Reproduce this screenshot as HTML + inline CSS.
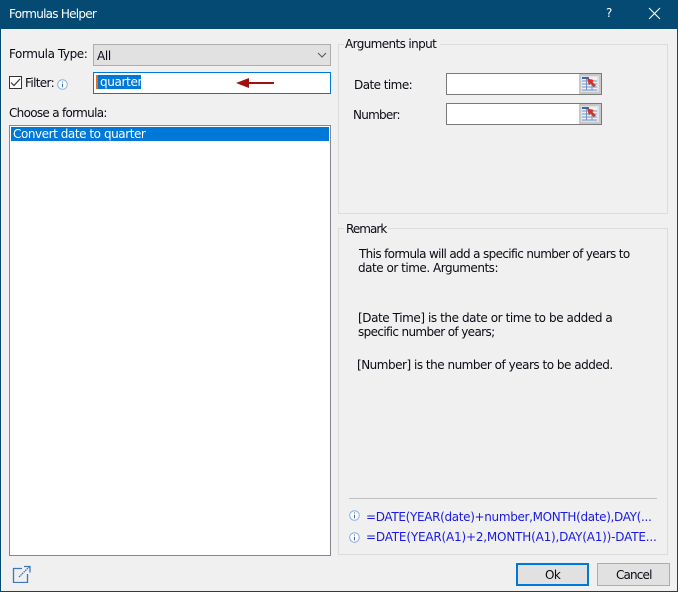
<!DOCTYPE html>
<html><head><meta charset="utf-8"><style>
html,body{margin:0;padding:0}
body{width:678px;height:592px;position:relative;overflow:hidden;background:#f0f0f0;font-family:"DejaVu Sans",sans-serif;font-size:12px;color:#0a0a14}
.a{position:absolute;box-sizing:border-box}
.t{position:absolute;white-space:nowrap;line-height:14px;letter-spacing:-.35px}
.b{color:#1a1ae6}
</style></head><body>
<div class="a" style="left:0;top:0;width:678px;height:29px;background:#054a73"></div>
<div class="a" style="left:0;top:0;width:1px;height:592px;background:#054a73"></div>
<div class="a" style="right:0;top:0;width:1px;height:592px;background:#054a73"></div>
<div class="a" style="left:0;bottom:0;width:678px;height:1px;background:#054a73"></div>
<div class="t" style="left:9px;top:7px;color:#fff;letter-spacing:-.75px">Formulas Helper</div>
<div class="t" style="left:606px;top:6px;color:#fff">?</div>
<svg class="a" style="left:648px;top:7px" width="13" height="13"><path d="M1 1L12 12M12 1L1 12" stroke="#fff" stroke-width="1.1"/></svg>

<div class="t" style="left:9px;top:47px;letter-spacing:-.43px">Formula Type:</div>
<div class="a" style="left:93px;top:44px;width:238px;height:22px;background:#e1e1e1;border:1px solid #adadad"></div>
<div class="t" style="left:97px;top:49px">All</div>
<svg class="a" style="left:317px;top:52px" width="10" height="7"><path d="M1 1L5 5L9 1" fill="none" stroke="#555" stroke-width="1"/></svg>

<div class="a" style="left:9px;top:76px;width:13px;height:13px;background:#fff;border:1px solid #333"></div>
<svg class="a" style="left:10px;top:77px" width="11" height="11"><path d="M1 5.500L4 8.500L10 2" fill="none" stroke="#333" stroke-width="1.200"/></svg>
<div class="t" style="left:25px;top:76px;letter-spacing:-.65px">Filter:</div>
<svg class="a" style="left:57px;top:79px" width="11" height="11"><circle cx="5.500" cy="5.500" r="4.800" fill="#fff" stroke="#8fb0dc"/><path d="M5.500 2.500v1M5.500 4.800v3.500" stroke="#3a70b8"/></svg>
<div class="a" style="left:93px;top:72px;width:238px;height:22px;background:#fff;border:1px solid #0078d7"></div>
<div class="a" style="left:96px;top:75px;width:2px;height:14px;background:#e07020"></div>
<div class="a" style="left:98px;top:75px;width:43px;height:14px;background:#0078d7"></div>
<div class="t" style="left:100px;top:75px;color:#fff">quarter</div>
<svg class="a" style="left:236px;top:76px" width="40" height="14"><path d="M0 7L13 2V6H38V8H13V12Z" fill="#a01010"/></svg>

<div class="t" style="left:9px;top:106px;letter-spacing:-.7px">Choose a formula:</div>
<div class="a" style="left:9px;top:125px;width:322px;height:431px;background:#fff;border:1px solid #828790"></div>
<div class="a" style="left:11px;top:127px;width:318px;height:14px;background:#0078d7"></div>
<div class="t" style="left:13px;top:127px;color:#fff;letter-spacing:-.44px">Convert date to quarter</div>

<div class="a" style="left:338px;top:44px;width:330px;height:170px;border:1px solid #dcdcdc"></div>
<div class="a" style="left:344px;top:40px;width:96px;height:10px;background:#f0f0f0"></div>
<div class="t" style="left:345px;top:37px;letter-spacing:-.62px">Arguments input</div>
<div class="t" style="left:354px;top:78px;letter-spacing:-.55px">Date time:</div>
<div class="t" style="left:353px;top:108px;letter-spacing:-.75px">Number:</div>

<div class="a" style="left:446px;top:73px;width:156px;height:22px;background:#fff;border:1px solid #7a7a7a"></div>
<div class="a" style="left:579px;top:74px;width:22px;height:20px;background:#e1e1e1;border:2px solid #c8c8c8"></div>
<svg class="a" style="left:581px;top:76px" width="18" height="16"><rect x="1" y="1" width="15" height="13" fill="#eef2f8"/><path d="M1 2h7" stroke="#3d66b0" stroke-width="2"/><path d="M1 5h15M1 8h15M1 11h15M1 14h15M5.500 3v11M11 3v11" stroke="#6f94c8"/><path d="M6 2L13 4.500L11.500 6L15 9.500L12.500 11L9.500 7.500L8 9.500Z" fill="#d8321e"/></svg>
<div class="a" style="left:446px;top:103px;width:156px;height:22px;background:#fff;border:1px solid #7a7a7a"></div>
<div class="a" style="left:579px;top:104px;width:22px;height:20px;background:#e1e1e1;border:2px solid #c8c8c8"></div>
<svg class="a" style="left:581px;top:106px" width="18" height="16"><rect x="1" y="1" width="15" height="13" fill="#eef2f8"/><path d="M1 2h7" stroke="#3d66b0" stroke-width="2"/><path d="M1 5h15M1 8h15M1 11h15M1 14h15M5.500 3v11M11 3v11" stroke="#6f94c8"/><path d="M6 2L13 4.500L11.500 6L15 9.500L12.500 11L9.500 7.500L8 9.500Z" fill="#d8321e"/></svg>

<div class="a" style="left:338px;top:228px;width:330px;height:327px;border:1px solid #dcdcdc"></div>
<div class="a" style="left:344px;top:224px;width:44px;height:10px;background:#f0f0f0"></div>
<div class="t" style="left:346px;top:222px;letter-spacing:-.95px">Remark</div>
<div class="t" style="left:359px;top:247px;letter-spacing:-.65px">This formula will add a specific number of years to</div>
<div class="t" style="left:358px;top:261px;letter-spacing:-.48px">date or time. Arguments:</div>
<div class="t" style="left:358px;top:311px;letter-spacing:-.42px">[Date Time] is the date or time to be added a</div>
<div class="t" style="left:358px;top:325px;letter-spacing:-.63px">specific number of years;</div>
<div class="t" style="left:357px;top:358px;letter-spacing:-.49px">[Number] is the number of years to be added.</div>

<div class="a" style="left:349px;top:498px;width:308px;height:1px;background:#c0c0c0"></div>
<svg class="a" style="left:349px;top:510px" width="11" height="11"><circle cx="5.500" cy="5.500" r="4.800" fill="#fff" stroke="#8fb0dc"/><path d="M5.500 2.500v1M5.500 4.800v3.500" stroke="#3a70b8"/></svg>
<div class="t b" style="left:366px;top:510px;letter-spacing:-.33px">=DATE(YEAR(date)+number,MONTH(date),DAY(...</div>
<svg class="a" style="left:349px;top:532px" width="11" height="11"><circle cx="5.500" cy="5.500" r="4.800" fill="#fff" stroke="#8fb0dc"/><path d="M5.500 2.500v1M5.500 4.800v3.500" stroke="#3a70b8"/></svg>
<div class="t b" style="left:366px;top:530px;letter-spacing:-.19px">=DATE(YEAR(A1)+2,MONTH(A1),DAY(A1))-DATE...</div>

<svg class="a" style="left:12px;top:565px" width="20" height="18"><path d="M10 3.500H1.500V17.500H15.500V9" fill="none" stroke="#3a78b8" stroke-width="1.300"/><path d="M7 12L17 2" stroke="#3a78b8" stroke-width="1.300" stroke-dasharray="1.500 .7"/><path d="M12 1.500H18V7.500" fill="none" stroke="#3a78b8" stroke-width="1.300"/></svg>

<div class="a" style="left:516px;top:563px;width:73px;height:23px;background:#e1e1e1;border:2px solid #0078d7"></div>
<div class="t" style="left:545px;top:568px;letter-spacing:-.6px">Ok</div>
<div class="a" style="left:597px;top:563px;width:73px;height:23px;background:#e1e1e1;border:1px solid #adadad"></div>
<div class="t" style="left:616px;top:568px;letter-spacing:-.85px">Cancel</div>
</body></html>
